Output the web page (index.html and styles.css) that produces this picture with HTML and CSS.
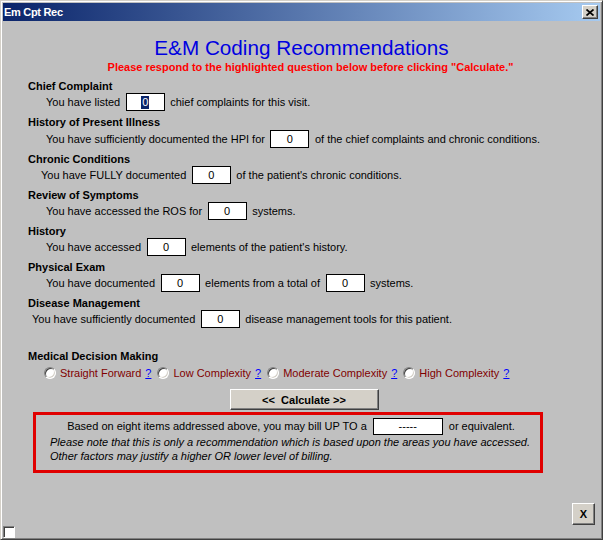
FILE: index.html
```html
<!DOCTYPE html>
<html>
<head>
<meta charset="utf-8">
<link rel="stylesheet" href="styles.css">
</head>
<body>
<div class="window">
  <div class="titlebar">
    <span class="title">Em Cpt Rec</span>
    <span class="tb-close"><svg width="8" height="7" viewBox="0 0 8 7"><path d="M0.5 0.5L7.5 6.5M7.5 0.5L0.5 6.5" stroke="#000" stroke-width="1.7"/></svg></span>
  </div>
  <div class="body">
    <h1 class="heading">E&amp;M Coding Recommendations</h1>
    <p class="notice">Please respond to the highlighted question below before clicking "Calculate."</p>
    <div class="sections">
      <section class="sec">
        <h2 class="sec-title">Chief Complaint</h2>
        <div class="sec-row">You have listed <span class="field"><span class="sel">0</span></span> chief complaints for this visit.</div>
      </section>
      <section class="sec">
        <h2 class="sec-title">History of Present Illness</h2>
        <div class="sec-row">You have sufficiently documented the HPI for <span class="field">0</span> of the chief complaints and chronic conditions.</div>
      </section>
      <section class="sec">
        <h2 class="sec-title">Chronic Conditions</h2>
        <div class="sec-row sec-row--narrow">You have FULLY documented <span class="field">0</span> of the patient's chronic conditions.</div>
      </section>
      <section class="sec">
        <h2 class="sec-title">Review of Symptoms</h2>
        <div class="sec-row">You have accessed the ROS for <span class="field">0</span> systems.</div>
      </section>
      <section class="sec">
        <h2 class="sec-title">History</h2>
        <div class="sec-row">You have accessed <span class="field">0</span> elements of the patient's history.</div>
      </section>
      <section class="sec">
        <h2 class="sec-title">Physical Exam</h2>
        <div class="sec-row">You have documented <span class="field">0</span> elements from a total of <span class="field">0</span> systems.</div>
      </section>
      <section class="sec">
        <h2 class="sec-title">Disease Management</h2>
        <div class="sec-row sec-row--wide">You have sufficiently documented <span class="field">0</span> disease management tools for this patient.</div>
      </section>
      <section class="sec sec--mdm">
        <h2 class="sec-title">Medical Decision Making</h2>
        <div class="options">
          <span class="opt"><span class="radio"></span><span class="opt-label">Straight Forward</span><span class="help">?</span></span>
          <span class="opt"><span class="radio"></span><span class="opt-label">Low Complexity</span><span class="help">?</span></span>
          <span class="opt"><span class="radio"></span><span class="opt-label">Moderate Complexity</span><span class="help">?</span></span>
          <span class="opt"><span class="radio"></span><span class="opt-label">High Complexity</span><span class="help">?</span></span>
        </div>
      </section>
    </div>
    <div class="calc-wrap"><button class="calc">&lt;&lt;&nbsp; Calculate &gt;&gt;</button></div>
    <div class="result">
      <div class="result-main">Based on eight items addressed above, you may bill UP TO a <span class="field field--wide">-----</span> or equivalent.</div>
      <p class="result-note">Please note that this is only a recommendation which is based upon the areas you have accessed.</p>
      <p class="result-note">Other factors may justify a higher OR lower level of billing.</p>
    </div>
    <div class="footer">
      <span class="check"></span>
      <button class="btn-x">X</button>
    </div>
  </div>
</div>
</body>
</html>
```
FILE: styles.css
```css
body {
  margin: 0;
  font-family: "Liberation Sans", Arial, sans-serif;
  font-size: 11px;
  color: #000;
}
.window {
  width: 603px;
  height: 540px;
  box-sizing: border-box;
  border: 1px solid;
  border-color: #d4d0c8 #404040 #404040 #d4d0c8;
  box-shadow: inset 1px 1px #fff, inset -1px -1px #808080;
  padding: 2px 2px 1px 2px;
  background: #c0c0c0;
  display: flex;
  flex-direction: column;
}
.titlebar {
  height: 18px;
  flex: none;
  display: flex;
  align-items: center;
  justify-content: space-between;
  background: linear-gradient(to right, #0a246a, #a6caf0);
  padding: 0 2px 0 1px;
}
.title {
  color: #fff;
  font-weight: bold;
  letter-spacing: -0.3px;
}
.tb-close {
  width: 16px;
  height: 14px;
  box-sizing: border-box;
  background: #d4d0c8;
  border: 1px solid;
  border-color: #fff #404040 #404040 #fff;
  box-shadow: inset -1px -1px #808080;
  display: flex;
  align-items: center;
  justify-content: center;
}
.body {
  flex: 1;
  display: flex;
  flex-direction: column;
  padding-top: 15px;
}
.heading {
  margin: 0;
  font-weight: normal;
  font-size: 20.7px;
  line-height: 24px;
  text-align: center;
  color: #0000e0;
}
.notice {
  margin: 0;
  font-weight: bold;
  line-height: 14px;
  text-align: center;
  color: #f00;
  padding-left: 18px;
}
.sections {
  margin-top: 6px;
}
.sec {
  margin-bottom: 5px;
}
.sec:nth-child(2) .sec-row {
  margin-top: 1px;
}
.sec--mdm {
  margin-top: 22px;
}
.sec-title {
  margin: 0;
  font-size: 11px;
  font-weight: bold;
  line-height: 13px;
  padding-left: 25px;
}
.sec-row {
  display: flex;
  align-items: center;
  height: 18px;
  column-gap: 5.5px;
  padding-left: 43px;
  white-space: nowrap;
}
.sec-row--narrow {
  padding-left: 38px;
}
.sec-row--wide {
  padding-left: 29px;
}
.field {
  width: 39px;
  height: 18px;
  box-sizing: border-box;
  background: #fff;
  border: 1px solid #000;
  display: flex;
  align-items: center;
  justify-content: center;
}
.field--wide {
  width: 70px;
  height: 17px;
}
.sel {
  background: #0a246a;
  color: #fff;
  padding: 0 1px;
  line-height: 13px;
}
.options {
  display: flex;
  align-items: center;
  height: 20px;
  margin-top: 0;
  padding-left: 41px;
  column-gap: 6px;
}
.opt {
  display: flex;
  align-items: center;
}
.radio {
  width: 12px;
  height: 12px;
  box-sizing: border-box;
  border-radius: 50%;
  background: #fff;
  border: 1px solid;
  border-color: #808080 #fff #fff #808080;
  box-shadow: inset 1px 1px #404040, inset -1px -1px #d4d0c8;
  margin-right: 4px;
}
.opt-label {
  color: #800000;
  margin-right: 4px;
}
.help {
  color: #0000ff;
  text-decoration: underline;
}
.calc-wrap {
  margin-top: 1px;
  display: flex;
  justify-content: center;
  padding-left: 5px;
}
.calc {
  width: 149px;
  height: 21px;
  padding: 0;
  font: bold 11px "Liberation Sans", Arial, sans-serif;
  color: #000;
  background: #d4d0c8;
  border: 1px solid;
  border-color: #fff #404040 #404040 #fff;
  box-shadow: inset -1px -1px #808080;
}
.result {
  margin: 2px 0 0 30px;
  width: 510px;
  box-sizing: border-box;
  border: 3px solid #e00000;
  padding: 2px 14px 7px;
}
.result-main {
  display: flex;
  align-items: center;
  justify-content: center;
  height: 18px;
  column-gap: 6px;
  padding-left: 6px;
  white-space: nowrap;
}
.result-note {
  margin: 0;
  font-style: italic;
  line-height: 14px;
  white-space: nowrap;
}
.footer {
  margin-top: auto;
  display: flex;
  justify-content: space-between;
  align-items: flex-end;
}
.check {
  width: 12px;
  height: 12px;
  box-sizing: border-box;
  background: #fff;
  border: 1px solid;
  border-color: #808080 #fff #fff #808080;
  box-shadow: inset 1px 1px #404040;
}
.btn-x {
  width: 23px;
  height: 22px;
  margin: 0 5px 13px 0;
  padding: 0;
  font: bold 11px "Liberation Sans", Arial, sans-serif;
  color: #000;
  background: #d4d0c8;
  border: 1px solid;
  border-color: #fff #404040 #404040 #fff;
  box-shadow: inset -1px -1px #808080;
}
```
